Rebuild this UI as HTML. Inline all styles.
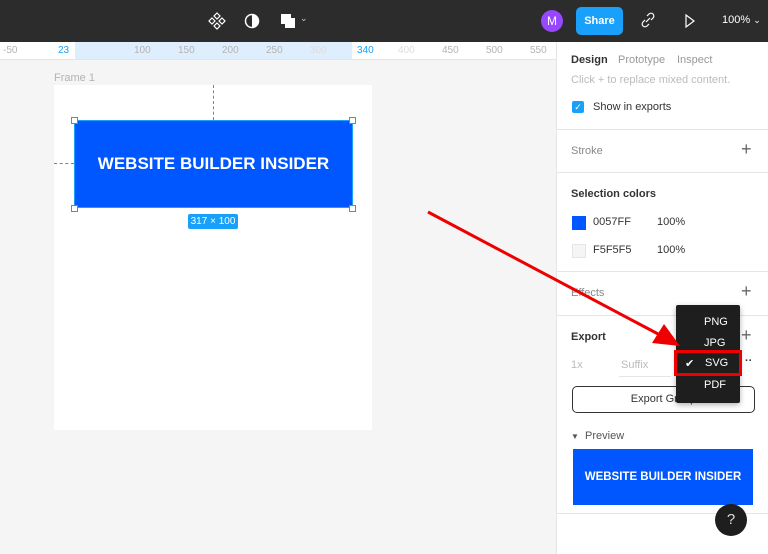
<!DOCTYPE html>
<html><head><style>
*{margin:0;padding:0;box-sizing:border-box}
body{width:768px;height:554px;overflow:hidden;position:relative;background:#f5f5f5;font-family:"Liberation Sans",sans-serif;font-size:11px;color:#333}
.a{position:absolute}
.top{left:0;top:0;width:768px;height:42px;background:#2c2c2c}
.ruler{left:0;top:42px;width:556px;height:18px;background:#fff;border-bottom:1px solid #e5e5e5}
.rl{position:absolute;top:3px;font-size:10px;color:#b3b3b3}
.panel{left:556px;top:42px;width:212px;height:512px;background:#fff;border-left:1px solid #e5e5e5}
.sep{position:absolute;left:0;width:212px;height:1px;background:#e5e5e5}
.t{position:absolute;white-space:nowrap}
.plus{position:absolute;left:184px;font-size:18px;color:#666;font-weight:300}
</style></head><body>
<div class="a top">
 <svg class="a" style="left:208px;top:12px" width="18" height="18" viewBox="0 0 18 18" fill="none" stroke="#fff" stroke-width="1.2"><path d="M9 1l3 3-3 3-3-3zM9 11l3 3-3 3-3-3zM4 6l3 3-3 3-3-3zM14 6l3 3-3 3-3-3z"/></svg>
 <svg class="a" style="left:244px;top:13px" width="16" height="16" viewBox="0 0 16 16"><circle cx="8" cy="8" r="6.5" fill="none" stroke="#fff" stroke-width="1.5"/><path d="M8 1.5a6.5 6.5 0 0 1 0 13z" fill="#fff"/></svg>
 <div class="a" style="left:281px;top:14px;width:10px;height:10px;background:#fff"></div>
 <div class="a" style="left:285px;top:18px;width:10px;height:10px;background:#fff"></div>
 <div class="t" style="left:300px;top:13px;color:#ccc;font-size:9px">⌄</div>
 <div class="a" style="left:541px;top:10px;width:22px;height:22px;border-radius:50%;background:#9747ff;color:#fff;text-align:center;line-height:22px;font-size:12px">M</div>
 <div class="a" style="left:576px;top:7px;width:47px;height:28px;border-radius:5px;background:#18a0fb;color:#fff;text-align:center;line-height:28px;font-size:11px;font-weight:bold">Share</div>
 <svg class="a" style="left:640px;top:12px" width="16" height="16" viewBox="0 0 16 16" fill="none" stroke="#fff" stroke-width="1.2"><path d="M6 10l4-4M7 4l2-2a2.8 2.8 0 0 1 4 4l-2 2M9 12l-2 2a2.8 2.8 0 0 1-4-4l2-2"/></svg>
 <svg class="a" style="left:684px;top:14px" width="12" height="14" viewBox="0 0 12 14" fill="none" stroke="#fff" stroke-width="1.2"><path d="M2 1l8 6-8 6z"/></svg>
 <div class="t" style="left:722px;top:14px;color:#fff;font-size:11px">100% <span style="font-size:9px">⌄</span></div>
</div>
<div class="a ruler">
 <div class="a" style="left:75px;top:0;width:277px;height:17px;background:#dfeefc"></div>
 <span class="rl" style="left:3px">-50</span>
 <span class="rl" style="left:58px;color:#18a0fb">23</span>
 <span class="rl" style="left:134px">100</span><span class="rl" style="left:178px">150</span><span class="rl" style="left:222px">200</span><span class="rl" style="left:266px">250</span><span class="rl" style="left:310px;color:#ddd">300</span>
 <span class="rl" style="left:357px;color:#18a0fb">340</span><span class="rl" style="left:398px;color:#ddd">400</span><span class="rl" style="left:442px">450</span><span class="rl" style="left:486px">500</span><span class="rl" style="left:530px">550</span>
</div>
<div class="t" style="left:54px;top:72px;color:#b3b3b3;font-size:11px">Frame 1</div>
<div class="a" style="left:54px;top:85px;width:318px;height:345px;background:#fff"></div>
<div class="a" style="left:213px;top:85px;height:35px;border-left:1px dashed #18a0fb"></div>
<div class="a" style="left:54px;top:163px;width:20px;border-top:1px dashed #18a0fb"></div>
<div class="a" style="left:74px;top:120px;width:279px;height:88px;background:#0057ff;border:1px solid #18a0fb;color:#fff;font-weight:bold;font-size:17px;text-align:center;line-height:86px">WEBSITE BUILDER INSIDER</div>
<div class="a" style="left:71px;top:117px;width:7px;height:7px;background:#fff;border:1px solid #18a0fb"></div>
<div class="a" style="left:349px;top:117px;width:7px;height:7px;background:#fff;border:1px solid #18a0fb"></div>
<div class="a" style="left:71px;top:205px;width:7px;height:7px;background:#fff;border:1px solid #18a0fb"></div>
<div class="a" style="left:349px;top:205px;width:7px;height:7px;background:#fff;border:1px solid #18a0fb"></div>
<div class="a" style="left:188px;top:214px;width:50px;height:15px;background:#18a0fb;color:#fff;border-radius:2px;font-size:10px;text-align:center;line-height:15px">317 × 100</div>
<div class="a panel">
 <div class="t" style="left:14px;top:12px;font-weight:bold;color:#333">Design</div>
 <div class="t" style="left:61px;top:12px;color:#999">Prototype</div>
 <div class="t" style="left:120px;top:12px;color:#999">Inspect</div>
 <div class="t" style="left:14px;top:32px;color:#bbb">Click + to replace mixed content.</div>
 <div class="a" style="left:15px;top:59px;width:12px;height:12px;background:#18a0fb;border-radius:2px;color:#fff;font-size:9px;text-align:center;line-height:12px">✓</div>
 <div class="t" style="left:36px;top:59px">Show in exports</div>
 <div class="sep" style="top:87px"></div>
 <div class="t" style="left:14px;top:103px;color:#888">Stroke</div><div class="plus" style="top:97px">+</div>
 <div class="sep" style="top:130px"></div>
 <div class="t" style="left:14px;top:146px;font-weight:bold">Selection colors</div>
 <div class="a" style="left:15px;top:174px;width:14px;height:14px;background:#0057ff"></div>
 <div class="t" style="left:36px;top:174px">0057FF</div><div class="t" style="left:100px;top:174px">100%</div>
 <div class="a" style="left:15px;top:202px;width:14px;height:14px;background:#f5f5f5;border:1px solid #e5e5e5"></div>
 <div class="t" style="left:36px;top:202px">F5F5F5</div><div class="t" style="left:100px;top:202px">100%</div>
 <div class="sep" style="top:229px"></div>
 <div class="t" style="left:14px;top:245px;color:#888">Effects</div><div class="plus" style="top:239px">+</div>
 <div class="sep" style="top:273px"></div>
 <div class="t" style="left:14px;top:289px;font-weight:bold">Export</div><div class="plus" style="top:283px">+</div>
 <div class="t" style="left:14px;top:317px;color:#bbb">1x</div>
 <div class="t" style="left:64px;top:317px;color:#bbb">Suffix</div>
 <div class="a" style="left:62px;top:334px;width:52px;height:1px;background:#e5e5e5"></div>
 <div class="t" style="left:188px;top:313px;font-weight:bold">··</div>
 <div class="a" style="left:15px;top:344px;width:183px;height:27px;border:1px solid #333;border-radius:5px;text-align:center;line-height:25px">Export Group</div>
 <div class="t" style="left:14px;top:388px;color:#555"><span style="font-size:8px">▼</span>&nbsp; Preview</div>
 <div class="a" style="left:16px;top:407px;width:180px;height:56px;background:#0057ff;color:#fff;font-weight:bold;font-size:11.5px;text-align:center;line-height:56px">WEBSITE BUILDER INSIDER</div>
 <div class="sep" style="top:471px"></div>
</div>
<div class="a" style="left:676px;top:305px;width:64px;height:98px;background:#1e1e1e;border-radius:2px;box-shadow:0 2px 6px rgba(0,0,0,.3);color:#fff;font-size:11px">
 <div class="t" style="left:28px;top:11px">PNG</div>
 <div class="t" style="left:28px;top:32px">JPG</div>
 <div class="t" style="left:28px;top:74px">PDF</div>
</div>
<div class="a" style="left:674px;top:350px;width:68px;height:26px;border:3px solid #e00;background:#1e1e1e;color:#fff;font-size:11px">
 <div class="t" style="left:8px;top:4px">✔</div><div class="t" style="left:28px;top:4px">SVG</div>
</div>
<svg class="a" style="left:0;top:0" width="768" height="554"><line x1="428" y1="212" x2="660" y2="335" stroke="#e00" stroke-width="3"/><path d="M680 346 L652 343 L664 324 Z" fill="#e00"/></svg>
<div class="a" style="left:715px;top:504px;width:32px;height:32px;border-radius:50%;background:#1e1e1e;color:#ddd;text-align:center;line-height:32px;font-size:15px">?</div>
</body></html>
